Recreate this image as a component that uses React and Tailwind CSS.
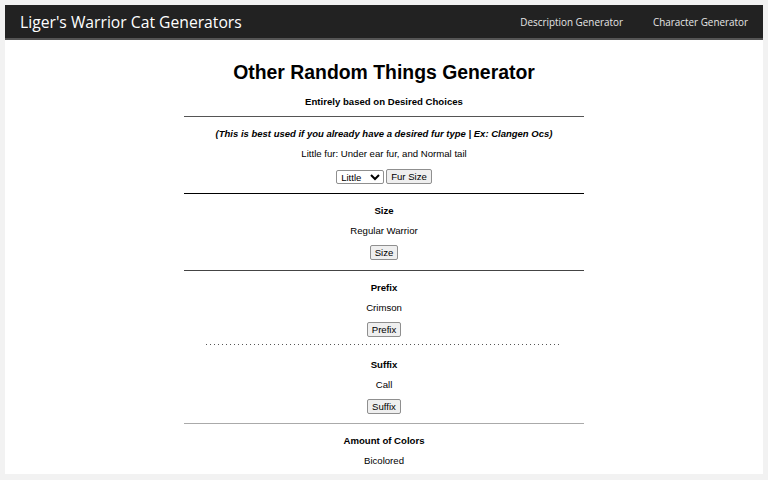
import React from "react";

const btn =
	"bg-[#efefef] border border-[#8f8f8f] rounded-[2px] px-[4px] h-[15px] leading-[13px] text-[9.6px] text-black";

const Section = ({ title, value, label, line, top = 11 }) => {
	return (
		<div className="flex flex-col items-center">
			<div className={`${top === 14 ? "mt-[14px]" : "mt-[11px]"} text-[9.6px] leading-[12px] font-bold`}>{title}</div>
			<div className="mt-[8px] text-[9.6px] leading-[12px]">{value}</div>
			{label && (
				<button className={`mt-[8px] ${btn}`}>{label}</button>
			)}
			{line}
		</div>
	);
};

const App = () => {
	return (
		<div className="min-h-[480px] bg-[#f2f2f2] px-[5px] pt-[5px] pb-[6px]" style={{ fontFamily: '"Liberation Sans", Arial, sans-serif' }}>
			<div className="bg-white min-h-[469px] flex flex-col">
				<nav
					className="h-[35px] bg-[#222222] border-b-[2px] border-[#555] flex items-center px-[15px] pt-[2px]"
					style={{ fontFamily: '"Open Sans", sans-serif' }}
				>
					<span className="text-white text-[15.7px]">Liger's Warrior Cat Generators</span>
					<div className="ml-auto flex gap-[30px] text-[9.9px] text-[#e6e6e6]">
						<a href="#">Description Generator</a>
						<a href="#">Character Generator</a>
					</div>
				</nav>

				<div className="flex flex-col items-center text-black">
					<h1 className="mt-[20px] text-[19.4px] leading-[24px] font-bold">Other Random Things Generator</h1>
					<p className="mt-[12px] text-[9.6px] leading-[12px] font-bold">Entirely based on Desired Choices</p>
					<hr className="mt-[8px] w-[400px] border-t border-[#555]" />

					<p className="mt-[11px] text-[9.5px] leading-[12px] font-bold italic">
						(This is best used if you already have a desired fur type | Ex: Clangen Ocs)
					</p>
					<p className="mt-[8px] text-[9.6px] leading-[12px]">Little fur: Under ear fur, and Normal tail</p>
					<div className="mt-[9px] flex items-center gap-[2px]">
						<select className="h-[14px] w-[48px] text-[9.6px] leading-[12px] border border-[#8f8f8f] rounded-[2px] bg-white">
							<option>Little</option>
						</select>
						<button className={btn}>Fur Size</button>
					</div>
					<hr className="mt-[9px] w-[400px] border-t border-black" />

					<Section
						title="Size"
						value="Regular Warrior"
						label="Size"
						line={<hr className="mt-[10px] w-[400px] border-t border-[#444]" />}
					/>
					<Section
						title="Prefix"
						value="Crimson"
						label="Prefix"
						line={
							<div className="mt-[7px] w-[356px] h-[1px] bg-[linear-gradient(to_right,#555_1px,transparent_1px)] bg-[length:4px_1px]" />
						}
					/>
					<Section
						top={14}
						title="Suffix"
						value="Call"
						label="Suffix"
						line={<hr className="mt-[9px] w-[400px] border-t border-[#aaa]" />}
					/>
					<Section title="Amount of Colors" value="Bicolored" />
				</div>
			</div>
		</div>
	);
};

export default App;
